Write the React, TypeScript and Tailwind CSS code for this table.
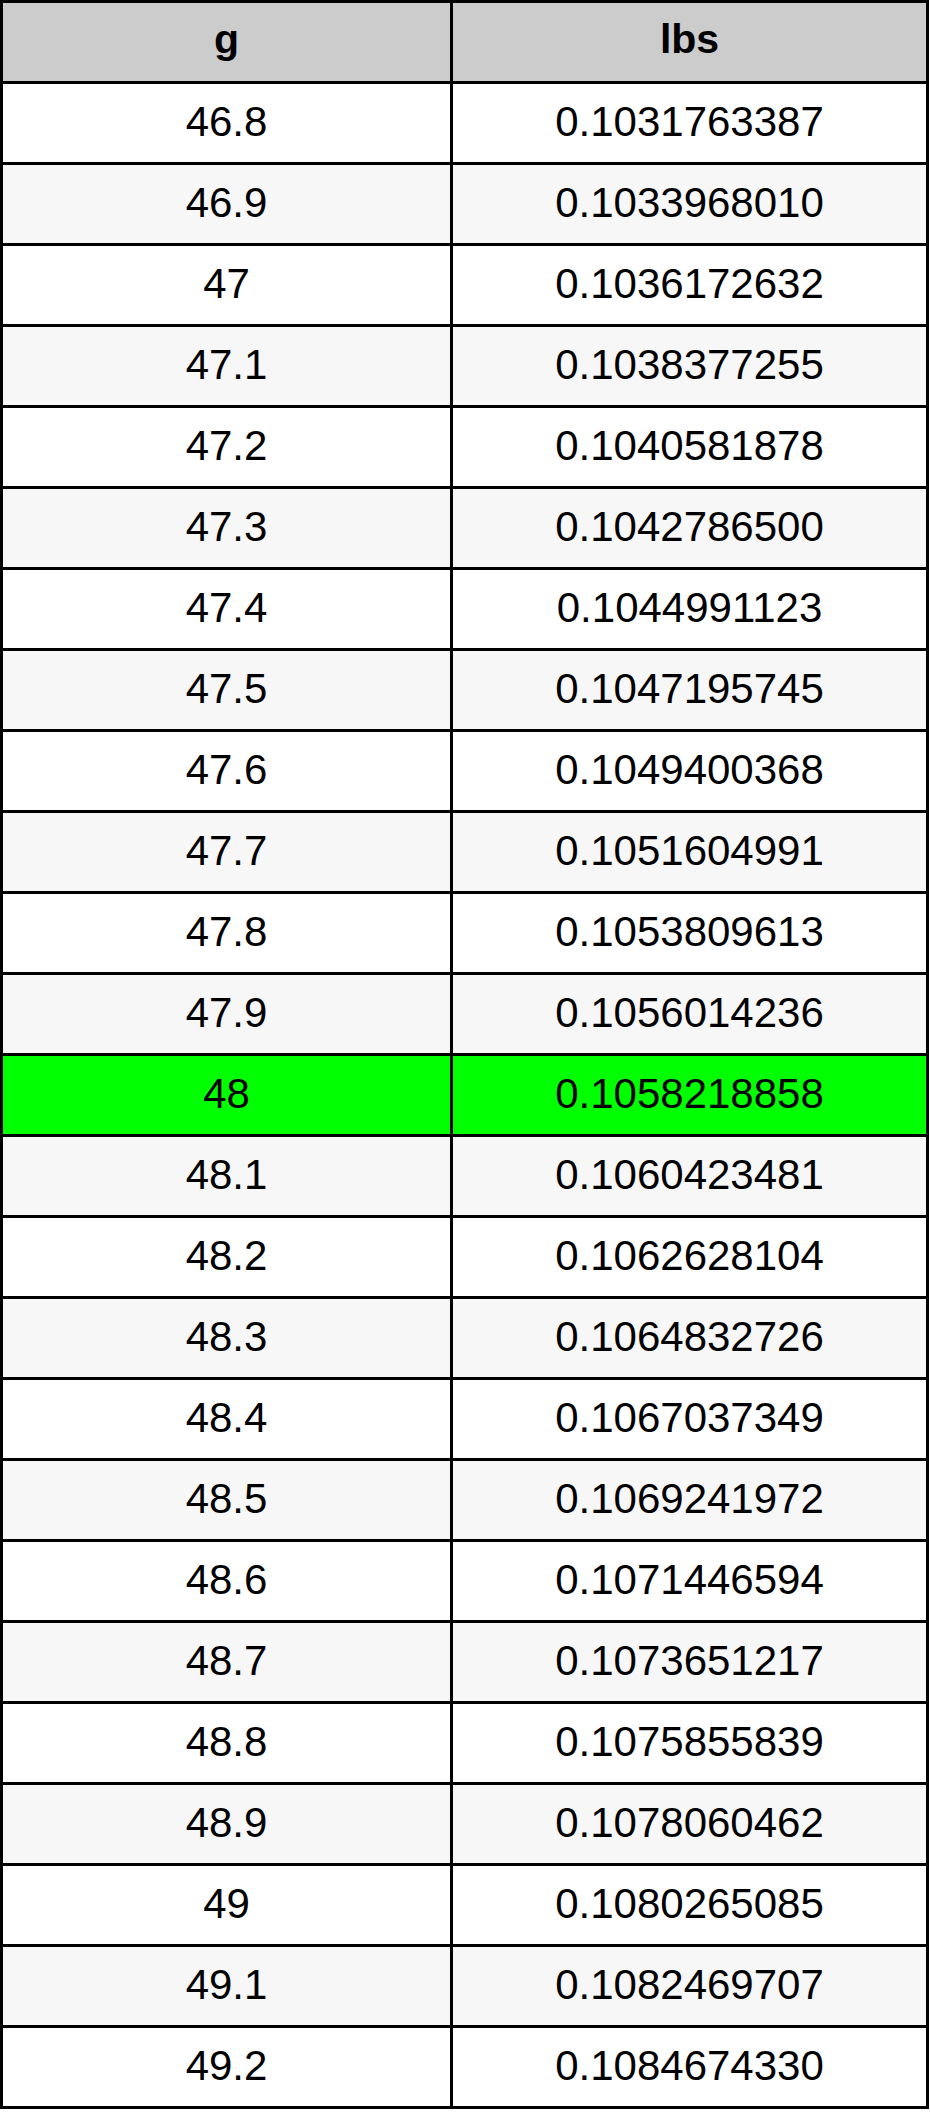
const rows: [string, string][] = [
  ["46.8", "0.1031763387"],
  ["46.9", "0.1033968010"],
  ["47", "0.1036172632"],
  ["47.1", "0.1038377255"],
  ["47.2", "0.1040581878"],
  ["47.3", "0.1042786500"],
  ["47.4", "0.1044991123"],
  ["47.5", "0.1047195745"],
  ["47.6", "0.1049400368"],
  ["47.7", "0.1051604991"],
  ["47.8", "0.1053809613"],
  ["47.9", "0.1056014236"],
  ["48", "0.1058218858"],
  ["48.1", "0.1060423481"],
  ["48.2", "0.1062628104"],
  ["48.3", "0.1064832726"],
  ["48.4", "0.1067037349"],
  ["48.5", "0.1069241972"],
  ["48.6", "0.1071446594"],
  ["48.7", "0.1073651217"],
  ["48.8", "0.1075855839"],
  ["48.9", "0.1078060462"],
  ["49", "0.1080265085"],
  ["49.1", "0.1082469707"],
  ["49.2", "0.1084674330"],
];

const App = () => {
  return (
    <div className="bg-white w-[930px] h-[2115px] font-['Liberation_Sans',Arial,sans-serif] text-black">
      <div className="w-[929px] border-[3px] border-black">
        <div className="flex h-[78px] bg-[#cccccc] text-[41px] font-bold">
          <div className="w-[450px] border-r-[3px] border-black flex items-center justify-center pb-[4px]">g</div>
          <div className="flex-1 flex items-center justify-center pb-[4px]">lbs</div>
        </div>
        {rows.map(([g, lbs], i) => {
          const bg = g === "48" ? "bg-[#00ff00]" : i % 2 === 0 ? "bg-white" : "bg-[#f7f7f7]";
          return (
            <div key={g} className={`flex h-[81px] border-t-[3px] border-black text-[42px] ${bg}`}>
              <div className="w-[450px] border-r-[3px] border-black flex items-center justify-center pb-[3px]">{g}</div>
              <div className="flex-1 flex items-center justify-center pb-[3px]">{lbs}</div>
            </div>
          );
        })}
      </div>
    </div>
  );
};

export default App;
